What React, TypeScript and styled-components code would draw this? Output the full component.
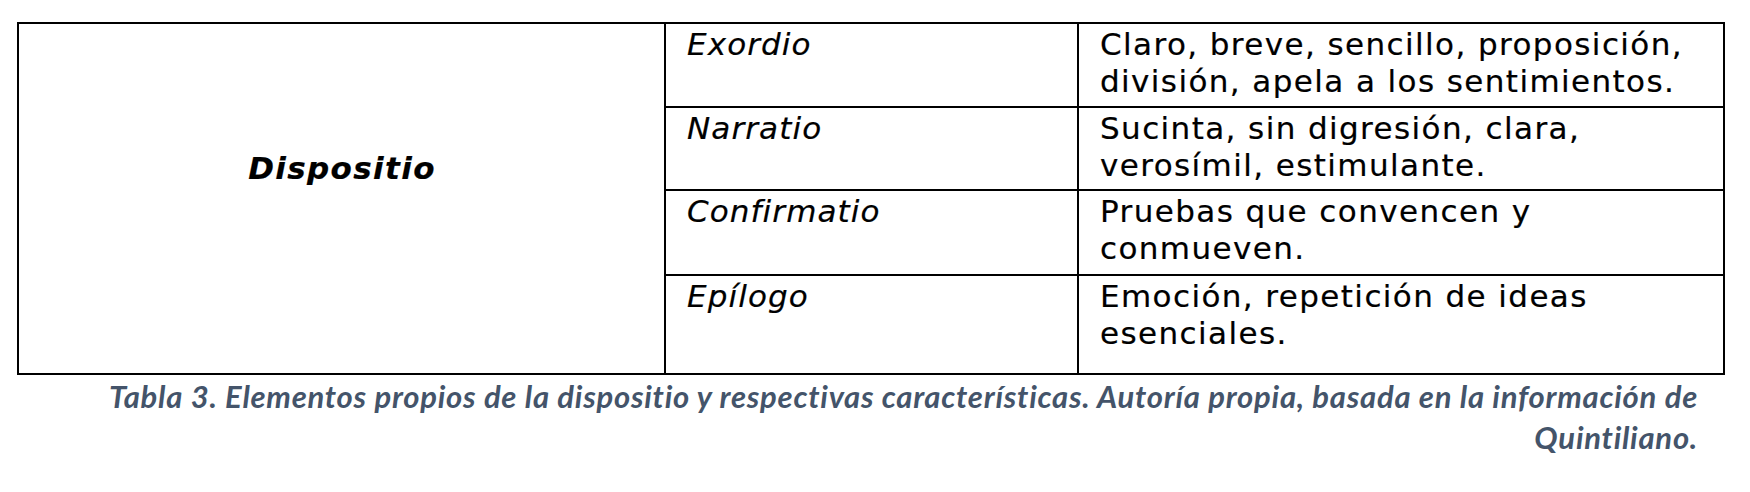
import React from "react";
import styled, { createGlobalStyle } from "styled-components";

const GlobalStyle = createGlobalStyle`
  html, body {
    margin: 0;
    padding: 0;
    background: #ffffff;
  }
  body {
    font-family: "DejaVu Sans", Verdana, sans-serif;
    color: #000000;
  }
`;

const Page = styled.div`
  width: 1750px;
  height: 492px;
  padding: 22px 0 0 17px;
  box-sizing: border-box;
`;

const Table = styled.div`
  display: grid;
  width: 1708px;
  box-sizing: border-box;
  grid-template-columns: 647px 413px 646px;
  grid-template-rows: 84px 83px 85px 99px;
  border-top: 2px solid #000;
  border-left: 2px solid #000;
`;

const Cell = styled.div`
  box-sizing: border-box;
  border-right: 2px solid #000;
  border-bottom: 2px solid #000;
  padding: 2px 20px 0 21px;
  font-size: 31px;
  line-height: 37px;
  letter-spacing: 1.4px;
  -webkit-text-stroke: 0.2px #000;
`;

const HeadCell = styled(Cell)`
  grid-row: 1 / span 4;
  display: flex;
  justify-content: center;
  align-items: flex-start;
  padding-top: 126px;
  font-weight: bold;
  font-style: italic;
  letter-spacing: 1.35px;
`;

const TermCell = styled(Cell)`
  font-style: italic;
  letter-spacing: 1.1px;
`;

const DescCell = styled(Cell)``;

const Caption = styled.p`
  margin: 1px 0 0 0;
  width: 1681px;
  text-align: right;
  font-family: Lato, "Open Sans", sans-serif;
  font-style: italic;
  font-weight: bold;
  font-size: 31px;
  letter-spacing: 0.75px;
  line-height: 41px;
  color: #44546a;
`;

const rows = [
  { term: "Exordio", desc: "Claro, breve, sencillo, proposición, división, apela a los sentimientos." },
  { term: "Narratio", desc: "Sucinta, sin digresión, clara, verosímil, estimulante." },
  { term: "Confirmatio", desc: "Pruebas que convencen y conmueven." },
  { term: "Epílogo", desc: "Emoción, repetición de ideas esenciales." },
];

export default function App() {
  return (
    <>
      <GlobalStyle />
      <Page>
        <Table>
          <HeadCell>Dispositio</HeadCell>
          {rows.map((r) => (
            <React.Fragment key={r.term}>
              <TermCell>{r.term}</TermCell>
              <DescCell>{r.desc}</DescCell>
            </React.Fragment>
          ))}
        </Table>
        <Caption>
          Tabla 3. Elementos propios de la dispositio y respectivas características. Autoría propia, basada en la información de
          <br />
          Quintiliano.
        </Caption>
      </Page>
    </>
  );
}
